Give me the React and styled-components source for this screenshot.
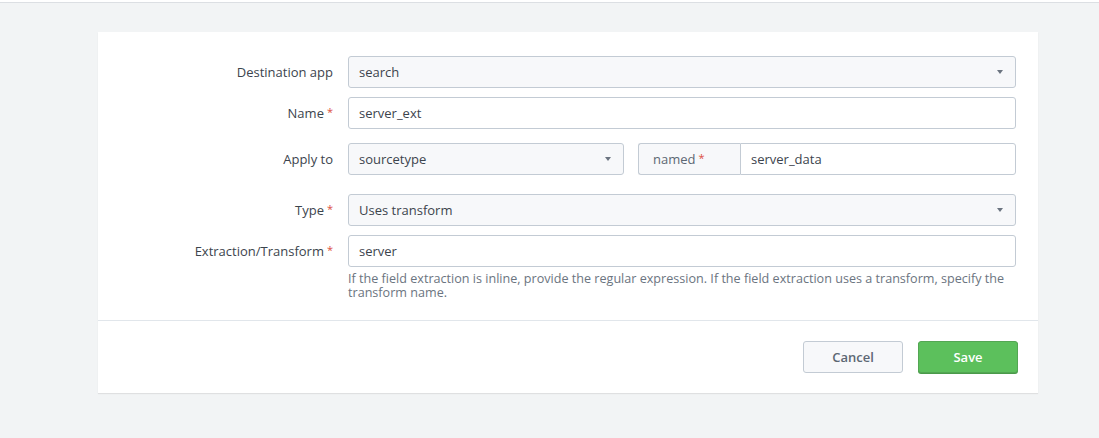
import React from "react";
import styled, { createGlobalStyle } from "styled-components";

const Global = createGlobalStyle`
  html, body { margin: 0; padding: 0; }
  body {
    background: #f2f4f5;
    font-family: "Open Sans", "Liberation Sans", Arial, sans-serif;
    color: #3c444d;
  }
  * { box-sizing: border-box; }
`;

const TopRule = styled.div`
  background: #ffffff;
  border-bottom: 1px solid #dcdfe3;
  height: 3px;
`;

const Page = styled.div`
  padding: 29px 61px 45px 98px;
`;

const Card = styled.div`
  width: 940px;
  background: #fff;
  box-shadow: 0 1px 1px rgba(0, 0, 0, 0.08);
`;

const Body = styled.div`
  padding: 24px 22px 20px 0;
  display: flex;
  flex-direction: column;
`;

const Row = styled.div`
  display: grid;
  grid-template-columns: 235px 1fr;
  column-gap: 15px;
  margin-top: ${(p) => p.$mt || 0}px;
`;

const Label = styled.div`
  height: 32px;
  text-align: right;
  font-size: 13px;
  line-height: 32px;
  color: #3c444d;
  white-space: nowrap;
`;

const Req = styled.span`
  color: #dc4e41;
  margin-left: 3px;
  font-size: 11px;
  line-height: 1;
  vertical-align: 2px;
`;

const Field = styled.div`
  display: flex;
  flex-direction: column;
`;

const Inline = styled.div`
  display: flex;
  gap: 14px;
`;

const Select = styled.div`
  position: relative;
  height: 32px;
  width: ${(p) => p.$w || "100%"};
  flex: ${(p) => (p.$w ? "none" : "1")};
  background: #f7f8fa;
  border: 1px solid #c3cbd4;
  border-radius: 3px;
  padding: 0 28px 0 10px;
  font-size: 13px;
  line-height: 30px;
  color: #3c444d;
`;

const Caret = styled.span`
  position: absolute;
  right: 12px;
  top: 13px;
  width: 0;
  height: 0;
  border-left: 3px solid transparent;
  border-right: 3px solid transparent;
  border-top: 4px solid #6b7480;
`;

const Input = styled.div`
  height: 32px;
  flex: 1;
  background: #fff;
  border: 1px solid #c3cbd4;
  border-radius: ${(p) => (p.$joined ? "0 3px 3px 0" : "3px")};
  padding: 0 10px;
  font-size: 13px;
  line-height: 30px;
  color: #3c444d;
`;

const Group = styled.div`
  flex: 1;
  display: flex;
`;

const Addon = styled.div`
  width: 102px;
  height: 32px;
  background: #f7f8fa;
  border: 1px solid #c3cbd4;
  border-right: none;
  border-radius: 3px 0 0 3px;
  padding: 0 14px;
  font-size: 13px;
  line-height: 30px;
  color: #5c6773;
`;

const Help = styled.div`
  margin-top: 5px;
  font-size: 12.6px;
  line-height: 14px;
  color: #6b7480;
`;

const Footer = styled.div`
  border-top: 1px solid #e1e6eb;
  padding: 20px 20px 20px 0;
  display: flex;
  justify-content: flex-end;
  gap: 15px;
`;

const Button = styled.button`
  width: 100px;
  height: 32px;
  border-radius: 3px;
  font-family: inherit;
  font-size: 13px;
  font-weight: 600;
  cursor: pointer;
  border: 1px solid ${(p) => (p.$primary ? "#53a653" : "#c3cbd4")};
  background: ${(p) => (p.$primary ? "#5cc05c" : "#f7f8fa")};
  color: ${(p) => (p.$primary ? "#ffffff" : "#5c6773")};
  box-shadow: ${(p) => (p.$primary ? "0 1px 0 #4a9a4a" : "none")};
`;

export default function App() {
  return (
    <>
      <Global />
      <TopRule />
      <Page>
        <Card>
          <Body>
            <Row>
              <Label>Destination app</Label>
              <Select>
                search
                <Caret />
              </Select>
            </Row>
            <Row $mt={9}>
              <Label>
                Name<Req>*</Req>
              </Label>
              <Input>server_ext</Input>
            </Row>
            <Row $mt={14}>
              <Label>Apply to</Label>
              <Inline>
                <Select $w="276px">
                  sourcetype
                  <Caret />
                </Select>
                <Group>
                  <Addon>
                    named<Req>*</Req>
                  </Addon>
                  <Input $joined>server_data</Input>
                </Group>
              </Inline>
            </Row>
            <Row $mt={19}>
              <Label>
                Type<Req>*</Req>
              </Label>
              <Select>
                Uses transform
                <Caret />
              </Select>
            </Row>
            <Row $mt={9}>
              <Label>
                Extraction/Transform<Req>*</Req>
              </Label>
              <Field>
                <Input>server</Input>
                <Help>
                  If the field extraction is inline, provide the regular expression. If the field extraction uses a
                  transform, specify the transform name.
                </Help>
              </Field>
            </Row>
          </Body>
          <Footer>
            <Button>Cancel</Button>
            <Button $primary>Save</Button>
          </Footer>
        </Card>
      </Page>
    </>
  );
}
